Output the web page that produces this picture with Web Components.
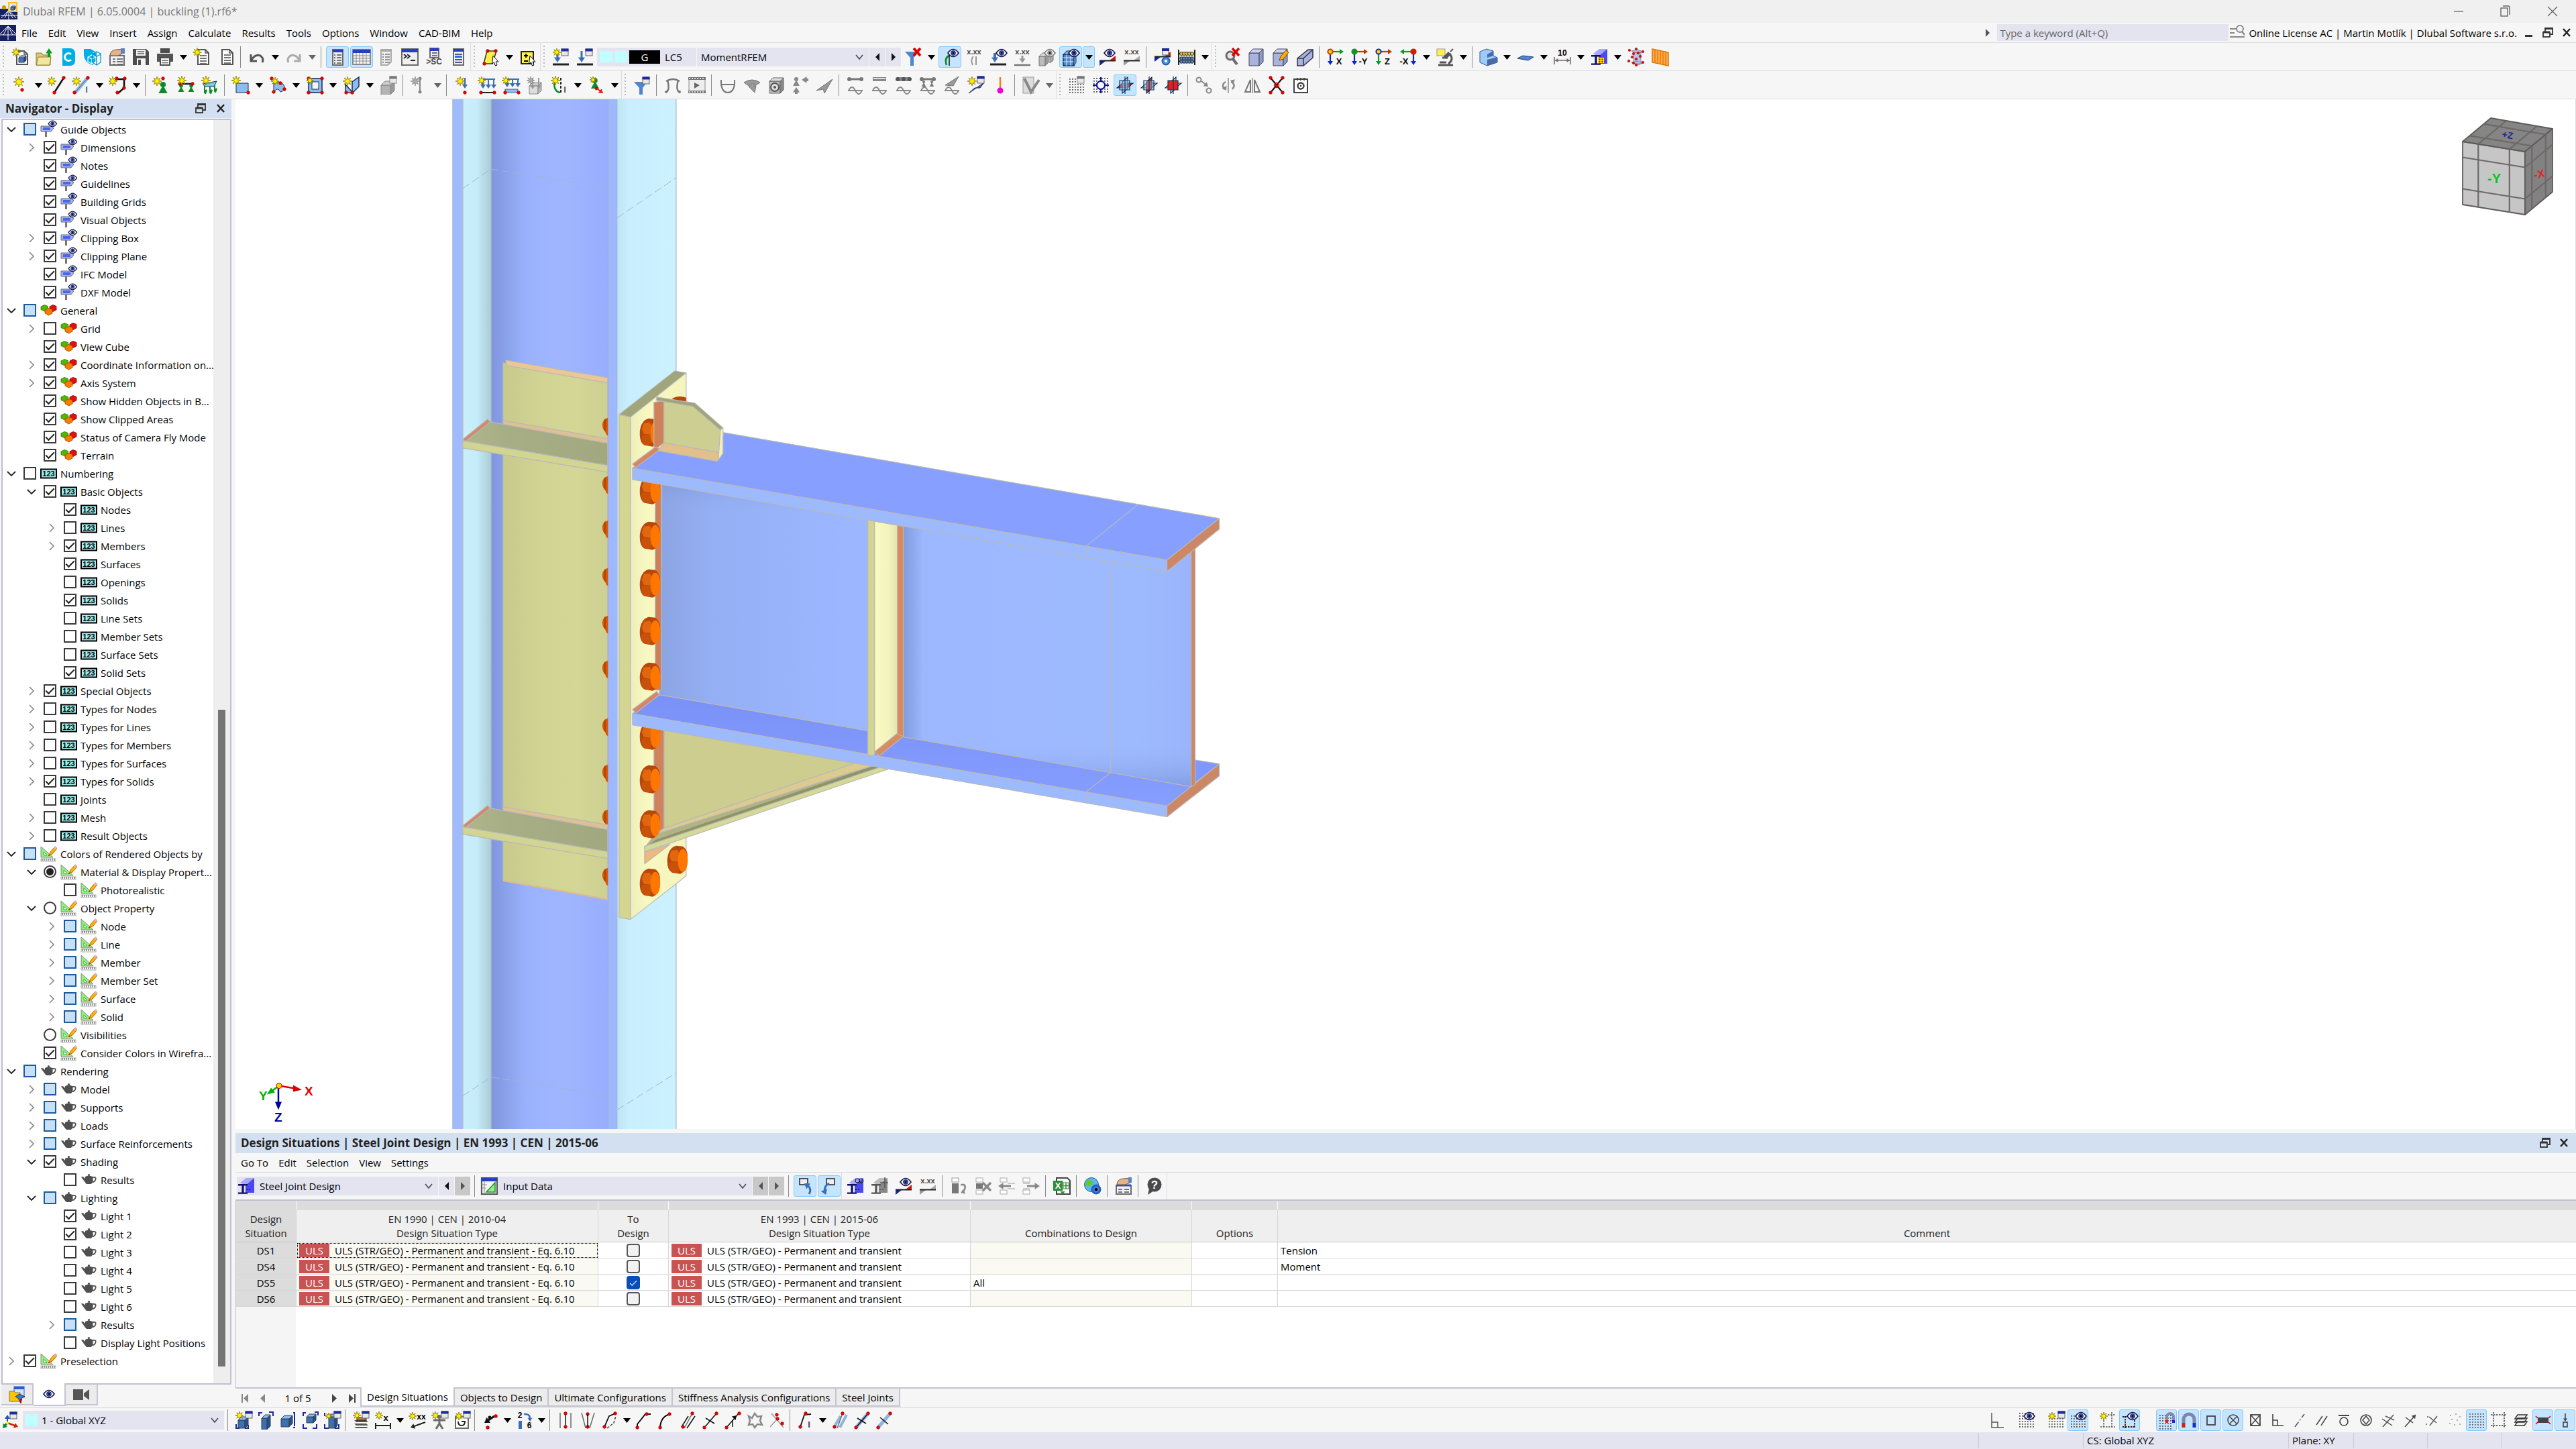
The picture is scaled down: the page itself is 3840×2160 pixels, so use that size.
<!DOCTYPE html>
<html lang="en">
<head>
<meta charset="utf-8">
<title>Dlubal RFEM</title>
<style>
html,body{margin:0;height:100%;background:#f6f6f6}
body{font:15px/20px "Open Sans","Noto Sans",sans-serif;color:#000}
</style>
</head>
<body>
<rf-app></rf-app>
<script>
/* ---------- svg drawing helpers ---------- */
const A=(d,f='none',s='none',w=1)=>`<path d="${d}" fill="${f}" stroke="${s}" stroke-width="${w}"/>`;
const L=(x1,y1,x2,y2,c='#333',w=1.5)=>`<path d="M${x1} ${y1}L${x2} ${y2}" stroke="${c}" stroke-width="${w}" fill="none"/>`;
const R=(x,y,w,h,f='none',s='none',sw=1)=>`<rect x="${x}" y="${y}" width="${w}" height="${h}" fill="${f}" stroke="${s}" stroke-width="${sw}"/>`;
const C=(x,y,r,f='none',s='none',w=1)=>`<circle cx="${x}" cy="${y}" r="${r}" fill="${f}" stroke="${s}" stroke-width="${w}"/>`;
const T=(x,y,s,z=11,f='#000',w=700,a='middle')=>`<text x="${x}" y="${y}" font-family="Liberation Sans,sans-serif" font-size="${z}" font-weight="${w}" fill="${f}" text-anchor="${a}">${s}</text>`;
const star=(x=7,y=7,r=7,f='#ffee00',s='#7a6a00')=>{let p='';for(let i=0;i<16;i++){const k=i%2?r*.42:r,a=i*Math.PI/8;p+=(x+k*Math.sin(a)).toFixed(1)+','+(y-k*Math.cos(a)).toFixed(1)+' '}return `<polygon points="${p}" fill="${f}" stroke="${s}" stroke-width=".7"/>`};
const dot=(x,y,r=2.4)=>C(x,y,r,'#e80000','#900',.5);
const eye=(x=19,y=7)=>A(`M${x-8} ${y}Q${x} ${y-11} ${x+8} ${y}Q${x} ${y+11} ${x-8} ${y}Z`,'#fff','#10104a',1.6)+C(x,y,3.4,'#3a62c8','#10104a',1)+C(x,y,1.4,'#000');
const win=(x=17,y=2)=>R(x,y,10,10,'#e8e8e8','#666',1)+R(x-.5,y-.5,11,4,'#1c2c9a');
const gwin=(x=17,y=2)=>R(x,y,10,10,'#e8e8e8','#888',1)+R(x-.5,y-.5,11,4,'#777');
const ah=(x,y,a,c,s=4)=>`<path transform="translate(${x} ${y}) rotate(${a})" d="M0 0L${-s*1.5} ${-s}L${-s*1.5} ${s}Z" fill="${c}"/>`;
const arr=(x1,y1,x2,y2,c,w=1.8,s=4)=>{const a=Math.atan2(y2-y1,x2-x1),k=s*1.3;return L(x1,y1,(x2-k*Math.cos(a)).toFixed(1),(y2-k*Math.sin(a)).toFixed(1),c,w)+ah(x2,y2,a*180/Math.PI,c,s)};
const page=(x=8,y=3,w=16,h=22,s='#555')=>A(`M${x} ${y}h${w-5}l5 5v${h-5}h${-w}Z`,'#fff',s,2)+A(`M${x+w-5} ${y}v5h5`,'none',s,1.5);
const rows=(x,y,w,n,c='#666',g=4)=>{let s='';for(let i=0;i<n;i++)s+=L(x,y+i*g,x+w,y+i*g,c,1.8);return s};
const grid=(x,y,n,m,c='#555',g=4)=>{let s='';for(let i=0;i<n;i++)for(let j=0;j<m;j++)s+=R(x+i*g,y+j*g,1.8,1.8,c);return s};
const cube=(x,y,w,h,d,f,t,r,s='#345')=>A(`M${x} ${y+d}h${w}v${h}h${-w}Z`,f,s)+A(`M${x} ${y+d}l${d} ${-d}h${w}l${-d} ${d}Z`,t,s)+A(`M${x+w} ${y+d}l${d} ${-d}v${h}l${-d} ${d}Z`,r,s);
const beam=(a,b,c)=>A('M5 9L14 2H26L24 12L12 13Z',b)+A('M26 2V24L13 24V13Z',a)+A('M2 11h14v2.4h-5.4v10H16v2.4H2v-2.4h5.4v-10H2Z',c)+R(13,16,8,6,a)+C(15,19,1,c)+C(19,19,1,c);
const diag=(a,b,y=18)=>A(`M2 ${y}v7l9 -7Z`,a)+A(`M26 ${y-1}v-7l-9 7Z`,b)+L(2,y-.5,26,y-.5,'#222',2);
const xxx=(y=10,c='#444')=>T(14,y,'x.xx',11,c);
const sup=(x,y,c='#0a8a2a',k=1)=>C(x,y,3.4*k,c)+A(`M${x} ${y+1}l${5.5*k} ${10*k}h${-11*k}Z`,c);
const sine=(c='#888')=>A('M3 22h22M4 22q5 -10 10 0t10 0','none',c,1.8);
const cub3=A('M1 4l5 -2.5l5.500 2v5l-5 2.500l-5.500 -2.500Z','#4fb800','#2b7a00',.8)+A('M14 4l5 -2.5l5 2v5.500l-5 2.500l-5 -2.500Z','#e01010','#800',.8)+A('M7 9l5.500 -2.500l5.500 2v5.500l-5.500 3l-5.500 -3Z','#f57c00','#9a4400',.8);
const bl='#3b6fb5',lb='#8fbcf0',db='#1c2c9a',g1='#6b6b6b',gn='#0a8a2a';
const plane=(r1,r2,r3)=>A('M2 18l8 -7h16l-8 7Z',r1,'#135',1.2)+A('M10 9l8 -7v17l-8 7Z',r2,'#135',1.2)+A('M6 7h15v14h-15Z',r3,'#135',1.2)+L(14,1,14,27,'#135',1.2);
const hl=(c='#777')=>L(5,5,23,5,c,3)+C(5,5,3,c)+C(23,5,3,c);
const lens=(x,y)=>C(x,y,6,'#e8e8e8',g1,3)+L(x+4,y+5,x+10,y+13,g1,4);
const axis=(o,h,v,t,l)=>{const r=l?22:6;return arr(r,6,r,26,v,2.2,4)+arr(r,6,l?2:26,6,h,2.2,4)+C(r,6,3.6,o[0],o[1],2)+T(l?8:19,25,t,13)};
/* ---------- icon glyphs on a 28 x 28 field ---------- */
const ICONS={
 none:'',
 logo:R(0,10,26,16,'#16205e')+A('M2 24L13 12L24 24M13 12V26M1 20H26M7 24L13 12L19 24','none','#fff',1)+R(13,1,12,13,'#dfe8f5','#ffc400',2)+cube(16,6,5,4,2,'#5a86c0','#8fb0dc','#34588c')+C(6,8,3,'#c89a00'),
 logo2:R(0,2,24,24,'#16205e')+A('M0 17H24M12 4V25M12 4L0 16M12 4L24 16M12 4L5 17M12 4L19 17','none','#fff',1),
 new:page(9,5,16,20)+cube(12,12,8,7,3,'#4a76b8','#8fb0dc','#274c86')+star(8,7,6.5),
 open:A('M2 8h8l2 3h11v15H2Z','#d9c877','#8c7a2a')+A('M2 26L5 14H24L22 26Z','#f2e6a0','#8c7a2a')+arr(21,14,21,1,'#0a9a1e',4,5),
 cloud:A('M5 1h12a7 7 0 0 1 7 7v12a7 7 0 0 1 -7 7h-12Z','#00aee6')+A('M18 10a5.500 5.500 0 1 0 0 8','none','#fff',3),
 cubes:A('M1 2h10l9 5v12l-6 7Q1 22 1 9Z','#00aee6')+A('M7 14l6 -3l6 3v7l-6 3l-6 -3ZM7 14l6 3l6 -3M13 17v7M15 8l6 -3l5 3v14l-7 4','none','#fff',1.2)+A('M15 9l5 -3l6 3v13l-6 4l-6 -4V10M15 10l5 3l6 -3M20 13v13','none','#0093c8',1.3),
 handlist:R(4,12,21,14,'#f4f4f4',g1,2)+rows(8,17,4,3)+rows(14,17,9,3)+A('M4 10Q6 3 14 3l10 -1v6l-8 4H5Z','#e3b48a','#7a5230')+R(20,1,6,8,'#5b84c4'),
 save:A('M2 2h20l4 4v20H2Z','#4d4d4d')+R(7,3,14,9,'#f4f4f4')+rows(9,6,10,2,'#777',3)+R(8,16,13,10,'#f4f4f4')+R(10,18,4,8,'#4d4d4d'),
 print:R(7,1,14,7,'#4d4d4d')+A('M2 9h24v12H2Z','#555')+R(7,15,14,11,'#fff','#4d4d4d',2)+rows(9,19,10,2,'#777',3.500),
 starpage:page()+rows(11,12,10,4)+star(7,7,6.500),
 page:page()+rows(11,11,10,4),
 undo:A('M5 10v10h9M6 18Q12 9 19 12Q25 16 22 22','none','#555',3),
 redo:A('M23 10v10h-9M22 18Q16 9 9 12Q3 16 6 22','none','#aaa',3),
 nav:R(7,3,15,23,'#eee',g1,2)+R(7,3,15,4,'#2a3cc0')+rows(9,11,2,4)+rows(13,11,7,4),
 table:R(1,3,26,22,'#f4f4f4',g1,1.500)+R(1,3,26,5,'#2a3cc0')+A('M1 12h26M1 16h26M1 20h26M6 8v17M11 8v17M16 8v17M21 8v17','none','#888',1),
 listg:A('M7 3h15v18l-5 5H7Z','#eee','#aaa',2)+R(7,3,15,3,'#aaa')+rows(9,10,2,4,'#888')+rows(13,10,7,4,'#888'),
 console:R(2,2,24,24,'#f0f0f0',g1,2)+R(2,2,24,5,'#2a3cc0')+A('M5 10l4 3l-4 3M10 10l4 3l-4 3','none','#222',1.800)+L(15,19,22,19,'#222',2),
 sc:R(8,1,13,14,'#eee',g1,2)+R(8,1,13,4,'#2a3cc0')+rows(11,8,8,2)+T(14,25,'&gt;SC',12,'#444'),
 panel:R(7,2,15,24,'#eee',g1,2)+R(7,2,15,4,'#2a3cc0')+rows(9,10,11,4,'#446',4)+R(9,12,10,3,'#2a6cf0'),
 select:A('M8 5L22 5L16 24L3 24Z','#ffee44','#333',1.500)+dot(9,5)+dot(21,5)+dot(4,24)+A('M17 12l8 9l-4 0l2 5l-2.500 1l-2 -5l-3 2Z','#fff','#000',1),
 plusminus:R(4,6,18,18,'#fff04a','#222',2)+A('M8 12h6M11 9v6M8 20h6','none','#000',1.8)+A('M17 12l8 9l-4 0l2 5l-2.500 1l-2 -5l-3 2Z','#fff','#000',1),
 loadstar:arr(9,6,9,22,bl,3,5)+L(2,25,26,25,'#222',3)+star(8,7,6)+win(15,2),
 load:arr(9,5,9,22,bl,3,5)+L(2,25,26,25,'#222',3)+win(15,2),
 funnelx:A('M2 6h20l-7 9v12h-5V15Z','#4f86cc')+A('M15 1l10 11M25 1l-10 11','none','#e00000',4),
 funnel:A('M2 9h20l-7 9v10h-5V18Z','#4f86cc')+win(15,2),
 eyesup:A('M14 11Q5 15 9 26','none',gn,2.500)+A('M13 12v15','none','#222',1.6)+eye(19,8),
 xxxsup:xxx()+A('M13 13Q8 18 12 26M17 13v13','none','#999',2),
 eyeload:arr(9,8,9,22,bl,4,5)+L(2,25,26,25,'#222',3)+eye(19,8),
 xxxload:xxx()+arr(14,12,14,23,'#999',3,4.500)+L(2,26,26,26,'#777',2.500),
 boxes:cube(3,8,9,14,5,'#bbb','#ddd','#999','#777')+A('M19 13v10l5 -4V12','#aaa','#777')+eye(19,8).replaceAll('#10104a','#777').replace('#3a62c8','#aaa'),
 grideye:A('M3 10h16v17H3Z','#4f86cc','#135',1.500)+A('M3 15h16M3 21h16M8 10v17M14 10v17','none','#dcecff',1)+A('M3 10l5 -5h14v17l-3 5V10Z','#86b2e8','#135',1)+eye(19,8),
 eyediag:diag('#15259a','#d01800',20)+eye(17,8),
 xxxdiag:xxx()+diag('#999','#aaa',20),
 resset:diag('#15259a','#c01010',14)+R(14,2,9,9,'#eee','#555')+R(13,1,11,4,db)+C(19,20,5.500,'#4f8fe0','#1f5fb0',2)+C(19,20,2,'#fff'),
 abacus:A('M2 3v23M26 3v23M2 9h24M2 20h24','none','#222',2)+[6,10,14,18,22].map(x=>C(x,9,2.500,'#f0d040','#222')+C(x,16,2.300,'#5a8ad0','#222')+C(x,21,2.300,'#5a8ad0','#222')).join(''),
 lensx:lens(11,12)+A('M14 1l10 11M24 1l-10 11','none','#e00000',3.500),
 cube:cube(3,2,15,19,6,'#a9b4de','#ccd4f0','#8c98cc','#445'),
 cubepen:cube(3,2,15,19,6,'#a9b4de','#ccd4f0','#8c98cc','#445')+A('M12 19l2 -6l8 -9l4 3l-8 10Z','#ffae00','#8a4a00'),
 cubeflat:A('M3 16L19 3H26V15L12 27H3Z','#a9b4de','#334',1.500)+A('M3 16H12V27M12 16L26 3','none','#334',1.500),
 axX:axis(['#ffd400','#e03000'],'#0a9a2a','#0a28c8','X'),
 axY:axis(['#0a9a2a','#0a9a2a'],'#d03000','#0a28c8','-Y'),
 axZ:axis(['#ffd400','#0a28c8'],'#d03000','#0a9a2a','Z'),
 axmX:axis(['#d02000','#d02000'],'#0a9a2a','#0a28c8','-X',1),
 micro:R(2,2,12,10,'#fff04a','#999')+A('M12 13l7 -7l4 4l-7 7Z','#555')+A('M21 9Q28 18 19 24M10 15h8M4 26h22M6 22h10','none','#555',3)+L(22,6,26,2,'#555',2),
 step:A('M1 6L11 2L21 5V12L27 15V22L12 27L1 22Z','#9ccbff','#34588c')+A('M12 10L21 5V12L12 15ZM12 18L27 14V22L12 27Z','#4a6ba8'),
 plate:A('M2 16L10 12L26 14L18 19Z','#4f86cc','#1c3c70'),
 dim10:T(14,12,'10',12)+A('M2 14v11M26 14v11M3 19h22','none',g1,1.500)+ah(3,19,180,g1,3)+ah(25,19,0,g1,3),
 beam:beam('#4a48f0','#a8a8ff','#10106a')+R(12,15,9,8,'#ffee00')+dot(14.500,17.500,1)+dot(18.500,17.500,1)+dot(14.500,21,1)+dot(18.500,21,1),
 beamg:beam('#4a48f0','#a8a8ff','#10106a')+C(17,6,3,'none','#111')+C(23,6,3,'none','#111'),
 beamp:beam('#4a48f0','#a8a8ff','#10106a'),
 beamgr:beam('#888','#bbb','#555')+A('M22 1v16M15 9h12','none','#555',1.500),
 rdots:A('M7 5L16 3L24 6L17 9ZM7 22L16 20L24 23L17 26ZM10 7h11v17H10Z','#b4c6e6','#88a')+[[4,4],[14,2],[24,6],[10,9],[17,8],[8,14],[20,13],[14,17],[3,20],[24,22],[10,23],[14,26]].map(p=>dot(p[0],p[1],1.800)).join(''),
 orange:A('M2 2L26 7V27L2 22Z','#ffa94d','#e07800',1.500)+A('M6 3v20M10 4v20M14 5v20M18 6v19M22 7v19','none','#e07800',1.300),
 stardot:star(12,9,8)+dot(17,21),
 sline:L(10,25,24,3,'#111',2.500)+dot(10,25)+dot(24,3)+star(6,8),
 smember:L(5,25,23,4,'#8fb4e0',5)+L(5,25,23,4,'#456',.8)+dot(4,25)+dot(24,3)+star(7,8)+T(22,25,'I',13,'#46a'),
 spoly:A('M8 5H23V18L14 26','none','#111',2.500)+dot(12,4)+dot(24,4)+dot(23,18)+dot(13,25)+star(6,8),
 ssup:sup(16,13,gn,1.200)+dot(16,4)+star(7,8),
 ssup2:L(5,12,24,12,'#222',2.500)+sup(7,15,gn,.8)+sup(22,15,gn,.8)+dot(5,12)+dot(24,12)+star(8,7),
 ssup3:A('M4 12L24 8L20 16L6 16Z','#7cc6e8','#135')+A('M6 16v8l3 -3l-2 6M14 16v8l3 -3l-2 6M21 14v8l3 -3l-2 6','none',gn,2)+star(8,7),
 ssurf:A('M7 11H25V25H7Z',lb,'#135')+dot(25,25)+star(7,7),
 ssurf2:A('M8 10Q20 6 24 16Q26 22 18 24Q14 16 8 24Z',lb,'#135')+dot(5,4)+dot(18,11)+dot(24,20)+dot(8,24)+star(10,8,6),
 ssurf3:R(5,4,20,21,lb,'#135',1.500)+R(10,9,10,11,'#f6f6f6','#135')+dot(5,4)+dot(25,4)+dot(5,25)+dot(25,25)+star(7,7,5.500),
 ssurf4:A('M5 13L15 24V9L25 2V16L15 26L5 24Z',lb,'#135',1.500)+dot(6,25)+dot(15,25)+star(8,8),
 solidg:cube(3,8,14,14,6,'#b4b4b4','#ccc','#999','#888')+gwin(16,1),
 starg:star(8,8,7,'#aaa','#888')+L(15,4,15,24,'#888',2)+C(15,4,2.500,'#888')+C(15,24,2.500,'#888'),
 ld1:arr(17,3,17,19,bl,2.500,4)+dot(17,25)+star(10,8),
 ld2:A('M6 5h20','none',bl,2)+arr(8,5,8,19,bl,2)+arr(16,5,16,19,bl,2)+arr(24,5,24,19,bl,2)+L(5,25,24,25,'#222',2)+dot(5,25)+dot(25,25)+star(6,7,6),
 ld3:A('M6 5h20','none',bl,2)+arr(8,5,8,17,bl,2)+arr(16,5,16,17,bl,2)+arr(24,5,24,17,bl,2)+R(5,20,19,5,lb,'#468')+dot(5,25)+dot(25,25)+star(6,7,6),
 ldg:cube(5,10,13,12,5,'#ddd','#ccc','#bbb','#888')+arr(10,3,10,20,'#999',2)+arr(19,3,19,20,'#999',2)+star(7,7,6,'#aaa','#888'),
 ldm:A('M12 4Q4 10 7 18Q9 24 15 25','none',gn,2.500)+`<path d="M16 3V25" stroke="#222" stroke-width="2" stroke-dasharray="4 2"/>`+T(22,25,'I',13,'#555')+star(8,7),
 ldn:sup(12,7,gn,1.100)+dot(14,19,2)+arr(15,19,24,26,'#e02020',2)+star(9,6,5),
 gsnap:A('M4 24Q10 22 6 6M24 24Q18 22 22 6M4 8Q14 2 24 8','none','#777',2.500)+C(4,24,2,'#777')+C(24,24,2,'#777'),
 film:R(2,5,24,18,'#eee','#888')+A('M1 4h26M1 24h26','none','#777',4)+`<path d="M2 4h24M2 24h24" stroke="#fff" stroke-width="1.500" stroke-dasharray="2 2"/>`+A('M10 10l8 4l-8 5Z','#666'),
 bend:A('M4 6v7Q6 25 14 25Q22 25 24 13V6M4 13h20','none','#777',2),
 fan:A('M2 10Q14 2 26 10L20 14Q14 9 9 15ZM9 16Q14 11 20 15L18 25Z','#999','#777'),
 speaker:cube(4,3,16,18,5,'#bbb','#ddd','#888','#666')+C(12,17,6,'#ddd','#555',2)+C(12,17,2,'#555'),
 darr:sup(8,5,'#888',.9)+arr(26,6,16,6,'#888',4,5)+arr(8,27,8,17,'#888',4,5),
 wedge:A('M2 22L26 5L14 26L12 20Z','#999','#777'),
 wav1:hl()+sine(),wav2:L(4,5,24,5,'#888',6)+L(5,4,23,4,'#ddd',2)+sine(),wav3:L(4,5,24,5,'#888',6)+C(5,5,3,'#555')+C(14,5,3,'#555')+C(23,5,3,'#555')+sine(),
 wav4:hl('#777')+sup(8,9,'#777',.6)+sup(20,9,'#777',.6)+sine(),wav5:A('M4 14L24 1L16 15Z','#999','#777')+sine(),
 starwin:A('M3 26L26 10L20 18L12 18Z','#3a6cff','#224')+win(16,1)+star(8,8),
 pin:L(14,2,14,20,'#ff7a1a',2.500)+C(14,22,4.500,'#f000d0'),
 ecgr:R(2,2,16,24,'#ddd','#999')+A('M4 4L14 24L26 6','none','#888',4),
 gridwin:grid(3,4,6,6)+gwin(15,1),
 snap:grid(3,3,6,6)+C(14,14,6,'#f6f6f6','#1010a0',2)+A('M14 2v7M14 19v7M2 14h7M19 14h7','none','#1010a0',2),
 pl1:plane('#e02020','#8fc4ee99','#8fc4ee66'),pl2:plane('#8fc4ee99','#e02020','#8fc4ee66'),pl3:plane('#8fc4ee99','#8fc4ee99','#e02020'),
 nodes:C(6,6,3.500,'none','#888',2)+C(21,22,3.500,'none','#888',2)+arr(10,8,20,16,'#888',2),
 rot:A('M10 9Q3 13 8 20M18 9Q26 13 20 20','none','#888',2.500)+L(14,3,14,26,'#888',1.500)+ah(11,22,60,'#888')+ah(17,7,200,'#888'),
 mirror:A('M3 24L11 6V24ZM25 24L17 6V24Z','none','#777',2)+L(14,3,14,26,'#777',1.200),
 redx:L(5,3,23,25,'#111',2)+L(23,3,5,25,'#111',2)+dot(5,3)+dot(23,3)+dot(5,25)+dot(23,25)+C(14,14,3.500,'none','#e00',1.500)+dot(14,14,1.500),
 gear:A('M4 5h20v20H4Z','#fff','#444',2)+C(14,15,4.500,'none','#444',2.500)+C(14,15,1.400,'#444')+A('M9 3v4M14 3v4M19 3v4','none','#444',2),
 cs:win(12,2)+arr(8,17,8,6,'#2050d0',2)+arr(8,18,24,24,'#d02000',2.500)+arr(8,18,1,26,gn,3)+C(8,18,2,'#ff0'),
 wb1:cube(6,9,10,12,5,'#3f6fb0','#8fbcf0','#27508c')+A('M3 20v6h5M16 26h5v-5','none',db,2)+star(8,7,6)+win(17,1),
 wb2:cube(8,6,8,17,5,'#3f6fb0','#8fbcf0','#27508c')+A('M4 8v-5h5M19 2h6v6','none',db,2),
 wb3:cube(4,7,12,12,5,'#3f6fb0','#8fbcf0','#27508c')+A('M24 3v20M22 3h3M22 25h3','none',db,2),
 wb4:cube(9,5,10,9,4,'#3f6fb0','#8fbcf0','#27508c')+A('M4 20v6h6M18 26h6v-6M4 8v-5h4M21 2h5v5','none',db,2),
 wb5:cube(9,5,9,17,4,'#3f6fb0','#8fbcf0','#27508c')+A('M3 20v6h6M18 26h6v-6M3 8v-5','none',db,2)+star(9,8,5)+win(17,1),
 stk:A('M4 14h18l3 3H7ZM4 19h18l3 3H7ZM4 24h18l3 2H7Z','#555')+R(8,10,14,4,'#d07a3a','#222')+star(8,7,6)+win(16,1),
 starx:A('M3 18v9M25 18v9M4 22h20','none','#222',2)+T(18,15,'x',13)+star(8,7,6),
 xx:T(20,13,'xx',12)+arr(26,17,4,25,'#222',2)+star(7,8,6),
 person:C(14,9,3,g1)+A('M5 14h18M14 12v7l-5 8M14 19l5 8','none',g1,3)+star(8,7,6)+win(17,1),
 seldoc:R(5,9,19,17,'#fff',g1,2)+A('M9 16q0 6 5 6t5 -6h-5','none','#222',2)+star(10,8,6)+win(17,1),
 dots:arr(20,8,5,18,'#111',3,5)+dot(22,8,2.500)+dot(10,25,2.500)+C(13,10,2.500,'#111'),
 renum:T(7,11,'2',12)+T(21,26,'6',12)+R(5,15,5,12,bl)+A('M13 5Q22 4 22 12','none',bl,2.500)+ah(22,16,90,bl,3.500),
 l1:L(6,3,6,26,g1)+L(22,3,22,26,g1)+L(14,4,14,24,'#111')+dot(14,4)+dot(14,24),
 l2:L(5,3,11,26,g1)+L(24,3,17,26,g1)+dot(14,5)+dot(14,24)+L(14,5,14,24,'#111'),
 l3:A('M6 24L13 8L22 4','none','#111',1.800)+dot(6,24)+dot(22,4)+`<path d="M10 26L20 18L23 8" fill="none" stroke="#444" stroke-width="1.500" stroke-dasharray="4 2"/>`,
 l4:A('M4 25V20L16 5H24','none','#111',2)+dot(4,25)+dot(18,5),
 l5:A('M5 25Q6 8 20 5','none','#111',2)+dot(5,25)+dot(19,5),
 l6:L(4,24,14,8,'#111')+L(12,26,24,8,'#111')+L(8,26,20,4,g1)+dot(20,4)+dot(6,24),
 l7:L(5,25,23,4,'#111')+L(7,11,20,19,'#111')+dot(23,4)+dot(5,25),
 l8:L(5,25,23,4,'#111')+L(14,24,14,14,'#111')+ah(20,7,-45,'#111',4)+dot(24,4)+dot(5,25),
 l9:A('M5 8l5 3l4 -7l4 5l6 -1l-2 7l3 6l-7 -1l-4 5l-3 -5l-6 1l2 -6Z','none','#888',2.500),
 l10:L(6,4,24,25,'#999')+L(4,24,15,12,'#999')+dot(14,6)+dot(15,12)+dot(22,19),
 m1:A('M6 24L12 6L22 5','none','#111',1.800)+dot(6,24)+dot(14,4)+T(19,25,'I',13,'#444'),
 m2:L(5,25,15,8,'#8fb4e0',4)+L(14,25,24,6,'#8fb4e0',4)+L(10,26,18,4,g1)+dot(18,4)+dot(6,24),
 m3:L(5,25,23,4,'#8fb4e0',5)+L(5,25,23,4,'#111')+L(7,11,20,19,'#111')+dot(23,4)+dot(5,25),
 m4:L(5,25,23,4,'#8fb4e0',5)+L(8,10,20,20,'#111')+dot(23,4)+dot(5,25),
 perp:A('M6 3V25H24M6 17h9v8','none','#555',1.500),
 geye:grid(3,3,6,6)+eye(18,8),gwinb:grid(3,11,6,4)+star(8,8,6)+win(17,1),
 geyeb:grid(3,7,6,5)+eye(18,8),
 beye:`<path d="M3 9h6M7 8v18M3 24h20M21 14v12" fill="none" stroke="#222" stroke-width="1.800" stroke-dasharray="2.500 1.500"/>`+eye(18,8),bstar:`<path d="M3 24h22M20 2v24M8 14v12M14 6h12" fill="none" stroke="#555" stroke-width="1.500" stroke-dasharray="2.500 1.500"/>`+star(8,8,6),
 magg:grid(3,6,5,6)+A('M14 15V9a5 5 0 0 1 10 0v6','none','#88a',4)+R(12,14,4,4,'#d22')+R(22,14,4,4,'#22d'),
 mag:A('M6 18V13a8 8 0 0 1 16 0v5','none','#7f86ad',5)+R(3.500,18,5,7,'#d02010')+R(19.500,18,5,7,'#1030d0'),
 sq:R(8,8,12,13,'none','#444',1.800),cx:C(14,14,8,'none','#444',1.500)+L(8,8,20,20,'#444')+L(20,8,8,20,'#444'),
 sqx:R(7,6,14,16,'none','#444',1.800)+L(7,6,21,22,'#444')+L(21,6,7,22,'#444'),
 perp2:A('M7 5V22H23M7 14h7v8','none','#444',1.600),
 dl:`<path d="M7 24L21 5" stroke="#555" stroke-width="1.500" stroke-dasharray="9 3 2 3"/>`,par:L(6,21,15,8,'#444')+L(13,22,22,8,'#444'),
 tan:C(14,16,6,'none','#444',1.700)+L(6,7,22,7,'#444',2),dia:C(14,14,8,'none','#444',1.600)+A('M14 8l5 6l-5 6l-5 -6Z','none','#444',1.500),
 x1:L(6,24,22,6,'#555')+L(5,12,20,22,'#555')+L(10,8,23,14,'#555'),x2:L(6,24,22,6,'#444')+L(7,10,18,18,'#444')+ah(22,6,-48,'#444',3.500),
 x3:L(10,22,21,8,'#555')+L(9,9,20,18,'#555')+C(5,20,1,'#555')+C(7,9,1,'#555'),x4:[[8,7],[16,5],[22,9],[10,13],[18,14],[7,19],[14,21],[22,20]].map(p=>C(p[0],p[1],1,'#999')).join(''),
 g4:grid(3,4,6,6,'#666'),bsq:`<path d="M2 6h24M2 22h24M6 2v24M22 2v24" fill="none" stroke="#444" stroke-width="1.500" stroke-dasharray="2.500 1.500"/>`,
 layers:A('M5 22l4 -6h14l-4 6ZM5 17l4 -6h14l-4 6ZM5 12l4 -6h14l-4 6Z','#eee','#333',1.500),
 seg:R(6,10,16,8,'#444')+A('M3 8l3 3M3 20l3 -3M25 8l-3 3M25 20l-3 -3','none','#e00',1.500),
 dnl:arr(14,4,14,16,'#444',1.600,3)+R(11,17,6,7,'none','#444',1.600),
 tl:R(6,3,12,9,'#eee','#444',1.800)+A('M20 26Q25 17 16 12','none',bl,3)+ah(13,10,215,bl,5),
 tr:R(10,3,12,9,'#eee','#444',1.800)+A('M14 10Q5 15 8 23','none',bl,3)+ah(9,27,70,bl,5),
 r1:R(4,2,10,6,'#fff','#999')+R(4,10,10,15,'#777')+A('M17 12h5q4 4 -1 10','none','#888',2.500)+ah(17,24,160,'#888'),
 r2:R(4,2,10,6,'#fff','#aaa')+R(4,10,10,8,'#777')+R(4,20,10,6,'#fff','#aaa')+A('M14 9l12 12M26 9l-12 12','none','#888',3.500),
 r3:R(4,2,10,6,'#fff','#aaa')+R(4,20,10,6,'#fff','#aaa')+arr(20,14,1,14,'#888',3,5)+L(15,10,26,10,'#bbb')+L(15,18,26,18,'#bbb'),
 r4:R(2,2,10,6,'#fff','#aaa')+R(2,20,10,6,'#fff','#aaa')+arr(8,14,27,14,'#888',3,5)+L(2,10,12,10,'#bbb')+L(2,18,12,18,'#bbb'),
 excel:A('M6 2h16l4 4v20H6Z','#fff','#444',2)+R(1,6,14,15,'#2e8b3a')+T(8,18,'X',13,'#fff')+R(16,9,8,9,'#fff','#2e8b3a')+L(20,9,20,18,'#2e8b3a')+L(16,13.500,24,13.500,'#2e8b3a')+A('M11 22h8l-4 4Z','#2e8b3a'),
 globe:C(12,12,10.500,'#5cb8f0','#2060b0')+A('M5 5q7 -2 9 3t-6 6t-5 -3ZM14 15q5 0 3 6l-4 1Z','#5fc83a')+C(19,19,6,'#3f7fe0','#2a60c0',3)+C(19,19,2.200,'#000'),
 hand2:R(3,13,22,13,'#f4f4f4',g1,2)+L(3,13,25,13,'#3050c0',3)+rows(6,19,6,2)+rows(15,19,7,2)+A('M4 10Q6 3 14 3l10 -1v7l-8 3H5Z','#e3b48a','#7a5230')+R(21,1,5,8,'#5b84c4'),
 help:C(14,12,10.500,'#4a4a4a')+A('M6 18L4 27L13 21Z','#4a4a4a')+T(14,18,'?',17,'#fff'),
 inp:R(2,2,23,24,'#f4f4f4','#555',2)+R(2,2,23,5,'#2a3cc0')+A('M9 23L22 9V23Z','#8ff08f','#2a8a2a',1.500)+A('M2 12h8M2 17h6M6 7v17','none','#888'),
 guide:A('M3 9H18L22 12L18 17H3Z','#a9b4e6','#667')+R(6,11,11,4,'#4a66f0')+R(9,17,3,8,'#777')+`<g transform="translate(5.500 0) scale(.78)">${eye(19,7)}</g>`,
 gen:`<g transform="translate(2 4)">${cub3}</g>`,
 num:R(3,7.500,23,13,'#9ff0ee','#000',2)+T(14.500,18,'123',11),
 col:A('M3 3L21 19H3Z','#8ff07c','#888')+A('M7 11l5 5H7Z','#fff','#4a4')+A('M15 16l2 -5l7 -8l3 3l-7 8Z','#ffb400','#a60')+A('M22 5l2.500 -3l3 3l-2.500 2.500Z','#e8b0c0')+C(15,16,1,'#e00')+R(3,21,22,4,'#fff','#999',.8)+A('M5 21v3M8 21v3M11 21v3M14 21v3M17 21v3M20 21v3M23 21v3','none','#444',1),
 tea:A('M9 9Q14 6 20 9Q22 16 18 20H11Q9 18 7 15L3 9.500Q6 8 9 12Z','#4f4f4f')+A('M20 10q6 -1 4.500 3q-1 4 -5 4','none','#4f4f4f',1.800)+C(14.500,6.500,1.600,'#4f4f4f'),
 navA:R(10,2,15,16,'#cfe4ff','#35c')+R(10,2,15,4,'#2a5cd0')+A('M3 9h7l2 2h7v13H3Z','#ffc400','#775')+A('M12 17l6 -4l8 4l-4 1l-2 9l-4 -8Z','#3a7ad0','#234')+L(20,20,20,27,'#d00',2),
 navB:eye(14,14),navC:A('M2 6h15v16H2ZM18 12l8 -6v16l-8 -6Z','#555'),
 min:L(7,14,21,14,'#666',1.300),max:R(7,9,10,12,'none','#666',1.400)+A('M10 6h8q2 0 2 2v11','none','#666',1.400),cls:A('M7 7l14 14M21 7L7 21','none','#666',1.400),
 mmin:R(8,17,11,3,'#333'),dock:R(7,13,10,7,'none','#333',1.800)+A('M10 12V7h11v9h-3','none','#333',1.800)+L(10,7.500,21,7.500,'#333',3)+L(7,13,17,13,'#333',3),x:A('M9 8l10 11M19 8L9 19','none','#222',2.500),
 find:A('M2 8h9M2 14h7M2 20h22','none','#888',2.200)+C(17,8,5,'none','#888',2)+L(20,12,24,17,'#888',2.200),
 chev:A('M9 11l5 6l5 -6','none','#444',1.500),al:A('M17 8v12l-6 -6Z','#111'),ar:A('M11 8v12l6 -6Z','#111'),arg:A('M11 8v12l6 -6Z','#555'),
 pf:R(9,8,2,13,'#888')+A('M19 8v13l-7 -6.500Z','#888'),pp:A('M18 8v13l-7 -6.500Z','#888'),pn:A('M10 8v13l7 -6.500Z','#444'),pl:R(17,8,2,13,'#444')+A('M9 8v13l7 -6.500Z','#444'),
 tri:A('M9 11h11l-5.500 7Z','#000'),trig:A('M9 11h11l-5.500 7Z','#666')
};
ICONS.alg=ICONS.al.replace('#111','#555');
/* ---------- base class ---------- */
class El extends HTMLElement{
 constructor(){super();this.attachShadow({mode:'open'})}
 connectedCallback(){if(!this.done){this.done=1;this.shadowRoot.innerHTML='<style>*{box-sizing:border-box}button,input,select{font:inherit;color:inherit;margin:0}button{border:0;background:none;padding:0}'+this.css()+'</style>'+this.html()}}
 css(){return ':host{display:block}'} html(){return '<slot></slot>'}
}
const def=(n,css,html)=>customElements.define(n,class extends El{css(){return typeof css=='function'?css(this):css}html(){return typeof html=='function'?html(this):html}});
const ic=n=>`<rf-icon name="${n}"></rf-icon>`;
def('rf-icon',':host{display:block;width:28px;height:28px;flex:none}svg{display:block;width:100%;height:100%}',e=>`<svg viewBox="0 0 28 28" aria-hidden="true">${ICONS[e.getAttribute('name')]||''}</svg>`);

/* a group of tool buttons: "|" separator, "v" drop-down arrow, "*" pressed, "_" gap */
def('rf-tools',`:host{display:flex;align-items:center;height:100%;flex:none;--w:34px;--v:18px}
:host([handle])::before{content:"";width:2px;height:34px;margin:0 6px 0 4px;background:repeating-linear-gradient(#bbb 0 2px,transparent 2px 5px)}
:host([end]){border-right:1px solid #dcdcdc}
:host([small]){--w:31px;--v:17px}
button{width:var(--w);height:32px;margin:0 1px;display:flex;align-items:center;justify-content:center;border:1px solid transparent;border-radius:3px;flex:none}
button.v{width:var(--v);margin:0 1px 0 0}
button.on{background:#c4e4ff;border-color:#86caf8}
i{width:1px;height:32px;background:#8c8c8c;margin:0 6px 0 3px;flex:none}
s{width:11px;flex:none}`,e=>e.getAttribute('items').split(' ').map(k=>k=='|'?'<i></i>':k=='_'?'<s></s>':k=='v'||k=='*v'?`<button class="v ${k=='v'?'':'on'}" aria-label="More">${ic('tri')}</button>`:k=='V'?`<button class="v" aria-label="More">${ic('trig')}</button>`:`<button class="${k[0]=='*'?'on':''}" aria-label="${k.replace('*','')}">${ic(k.replace('*',''))}</button>`).join(''));
def('rf-bar',`:host{display:flex;align-items:center;height:42px;border-top:1px solid #dcdcdc;background:#f6f6f6}`,'<slot></slot>');

def('rf-title',`:host{display:flex;align-items:center;height:34px;background:#f0f0f0;color:#777;font-size:16px}
span{margin-left:6px;flex:1}button{width:70px;height:34px;display:flex;align-items:center;justify-content:center}`,
`${ic('logo')}<span>Dlubal RFEM | 6.05.0004 | buckling (1).rf6*</span><button aria-label="Minimize">${ic('min')}</button><button aria-label="Restore">${ic('max')}</button><button aria-label="Close">${ic('cls')}</button>`);
def('rf-menu',`:host{display:flex;align-items:center;height:29px;background:#f6f6f6}
nav{display:flex;gap:16px;margin-left:4px;flex:1}
input{width:345px;height:25px;border:0;background:#e4e4f0;padding:0 4px}input::placeholder{color:#666;opacity:1}
span{margin:0 4px 0 2px}button{flex:none}`,
`${ic('logo2')}<nav>${'File Edit View Insert Assign Calculate Results Tools Options Window CAD-BIM Help'.split(' ').map(x=>`<button>${x}</button>`).join('')}</nav>${ic('arg')}<input aria-label="Keyword" placeholder="Type a keyword (Alt+Q)">${ic('find')}<span>Online License AC | Martin Motlík | Dlubal Software s.r.o.</span><button aria-label="Minimize document">${ic('mmin')}</button><button aria-label="Restore document">${ic('dock')}</button><button aria-label="Close document">${ic('x')}</button>`);

def('rf-combo',`:host{display:flex;align-items:center;height:28px;background:#e4e4f0;flex:none}
select{appearance:none;border:0;background:none;flex:1;height:28px;padding:0 6px;min-width:0}
.step{width:24px;height:28px;display:flex;align-items:center;justify-content:center;border-left:1px solid #f6f6f6}
.g{background:#c8c8c8}rf-icon{pointer-events:none}`,
e=>`<slot></slot>${e.hasAttribute('icon')?ic(e.getAttribute('icon')):''}<select aria-label="${e.getAttribute('label')}"><option>${e.getAttribute('value')}</option></select>${ic('chev')}${(e.getAttribute('steps')||'').split(' ').filter(Boolean).map(s=>`<button class="step ${s.endsWith('-')?'g':''}" aria-label="Step">${ic(s.replace('-',''))}</button>`).join('')}`);
def('rf-case',`:host{display:flex;align-items:center;gap:3px;height:28px;padding-left:4px;border-right:1px solid #f6f6f6;width:149px}
i{width:19px;height:17px;background:#c0ffff}b{width:46px;height:20px;background:#000;color:#fff;font-weight:400;text-align:center}span{margin-left:4px}`,'<i></i><i></i><b>G</b><span>LC5</span>');

/* ---------- navigator tree ---------- */
const TREE=`0v- guide Guide Objects
1>x guide Dimensions
1.x guide Notes
1.x guide Guidelines
1.x guide Building Grids
1.x guide Visual Objects
1>x guide Clipping Box
1>x guide Clipping Plane
1.x guide IFC Model
1.x guide DXF Model
0v- gen General
1>o gen Grid
1.x gen View Cube
1>x gen Coordinate Information on...
1>x gen Axis System
1.x gen Show Hidden Objects in B...
1.x gen Show Clipped Areas
1.x gen Status of Camera Fly Mode
1.x gen Terrain
0vo num Numbering
1vx num Basic Objects
2.x num Nodes
2>o num Lines
2>x num Members
2.x num Surfaces
2.o num Openings
2.x num Solids
2.o num Line Sets
2.o num Member Sets
2.o num Surface Sets
2.x num Solid Sets
1>x num Special Objects
1>o num Types for Nodes
1>o num Types for Lines
1>o num Types for Members
1>o num Types for Surfaces
1>x num Types for Solids
1.o num Joints
1>o num Mesh
1>o num Result Objects
0v- col Colors of Rendered Objects by
1vR col Material &amp; Display Propert...
2.o col Photorealistic
1vr col Object Property
2>- col Node
2>- col Line
2>- col Member
2>- col Member Set
2>- col Surface
2>- col Solid
1.r col Visibilities
1.x col Consider Colors in Wirefra...
0v- tea Rendering
1>- tea Model
1>- tea Supports
1>- tea Loads
1>- tea Surface Reinforcements
1vx tea Shading
2.o tea Results
1v- tea Lighting
2.x tea Light 1
2.x tea Light 2
2.o tea Light 3
2.o tea Light 4
2.o tea Light 5
2.o tea Light 6
2>- tea Results
2.o tea Display Light Positions
0>x col Preselection`.split('\n');
def('rf-node',e=>`:host{display:flex;align-items:center;height:27px;padding-left:${3+30*e.getAttribute('level')}px;white-space:nowrap}
button{width:20px;height:20px;margin-right:8px}button svg{display:block}
input{appearance:none;width:19px;height:19px;border:2px solid #3a3a3a;background:#fff;display:grid;place-items:center;flex:none}
input[type=radio]{border-radius:50%}
input.m{border-color:#1d5a9e;background:#c5e0f7}
input[type=checkbox]:checked::before{content:"";width:11px;height:5px;border:solid #222;border-width:0 0 2px 2px;transform:rotate(-45deg) translate(1px,-1px)}
input[type=radio]:checked::before{content:"";width:11px;height:11px;border-radius:50%;background:#222}
label{display:flex;align-items:center;gap:4px;margin-left:4px}`,
e=>{const o=e.getAttribute('open'),s=e.getAttribute('state'),r=/r/i.test(s);return `<button aria-label="Expand"><svg width="20" height="20">${o=='v'?A('M4 7l6 6l6 -6','none','#222',1.8):o=='>'?A('M7 4l6 6l-6 6','none','#888',1.6):''}</svg></button><input id="c" type="${r?'radio':'checkbox'}" class="${s=='-'?'m':''}" ${s=='x'||s=='R'?'checked':''}><label for="c">${ic(e.getAttribute('icon'))}<span><slot></slot></span></label>`});
def('rf-navigator',`:host{display:flex;flex-direction:column;width:345px}
header{display:flex;align-items:center;height:28px;background:#d3e0f1;font-weight:700;padding-left:8px;color:#222;font-size:17px}header span{flex:1}
header button{margin-right:2px}
.box{flex:1;min-height:0;margin:1px 0 0 2px;border:2px solid #c0c0d0;background:#fff;display:flex}
.list{flex:1;min-width:0}
.sb{width:25px;background:#eee;display:flex;justify-content:center;padding:879px 0 25px;flex:none}.sb i{width:11px;background:#757575}
.tabs{display:flex;height:34px;padding-left:2px;align-items:flex-start}
.tabs button{width:48px;height:31px;display:flex;align-items:center;justify-content:center;background:#ececec;border:2px solid #c4c4d2;border-top:0;border-left:0}
.tabs .on{background:#fff;height:34px;margin-top:-2px}`,
`<header><span>Navigator - Display</span><button aria-label="Float">${ic('dock')}</button><button aria-label="Close">${ic('x')}</button></header><div class="box"><div class="list">${TREE.map(l=>{const m=l.match(/^(\d)(.)(.) (\w+) (.*)$/);return `<rf-node level="${m[1]}" open="${m[2]}" state="${m[3]}" icon="${m[4]}">${m[5]}</rf-node>`}).join('')}</div><div class="sb"><i></i></div></div><div class="tabs" role="tablist"><button aria-label="Data">${ic('navA')}</button><button class="on" aria-label="Display">${ic('navB')}</button><button aria-label="Views">${ic('navC')}</button></div>`);

/* ---------- model view ---------- */
const poly=(p,f,s='#b8b8b8',w=1.2)=>`<polygon points="${p}" fill="${f}" stroke="${s}" stroke-width="${w}" stroke-linejoin="round"/>`;
const lin=(id,h,stops)=>`<linearGradient id="${id}" ${h?'':'x2="0" y2="1"'}>${stops.map(s=>`<stop offset="${s[0]}" stop-color="${s[1]}" ${s[2]!=null?`stop-opacity="${s[2]}"`:''}/>`).join('')}</linearGradient>`;
const bolt=(x,y)=>`<g transform="translate(${x} ${y})"><path d="M-15 -2Q-13 -18 -2 -21L8 -20Q14 -16 15 -8V4Q13 18 4 21L-8 19Q-16 15 -15 -2Z" fill="#b9470a"/><path d="M-9 -14L0 -15L3 -9L0 3L-9 2L-12 -5Z" fill="#e0670f"/><path d="M-12 5L-9 3L0 4L3 12L0 20L-8 18Q-14 14 -12 5Z" fill="#c9520a"/><ellipse cx="8" cy="1" rx="7.500" ry="17" fill="#ff7700"/></g>`;
const hb=y=>`<path d="M907 ${y-13}Q899 ${y-12} 898 ${y-3}Q898 ${y+4} 902 ${y+7}L904 ${y+12}L907 ${y+14}Z" fill="#d4570a"/><path d="M902 ${y-11}v18" stroke="#a03c04" stroke-width="1.500"/>`;
const stiff=d=>`<g transform="translate(0 ${d})">${poly('750,627 906,654 906,661 750,634','#dfc090')}${poly('690,657 731,629 906,661 906,694','url(#st)')}${poly('690,657 906,694 906,704 690,668','#d2d492')}${poly('690,655 727,625 731,629 694,658','#d4886a')}</g>`;
def('rf-scene',':host{display:block;width:100%;height:100%}svg{display:block;width:100%;height:100%}',()=>`<svg viewBox="351 148 3489 1534" preserveAspectRatio="xMinYMin meet" role="img" aria-label="Steel joint model"><defs>
${lin('lf',1,[[0,'#c9effb'],[.5,'#c5ecf8'],[1,'#a9ccd8']])}${lin('wb',1,[[0,'#8096dd'],[.1,'#879ee8'],[.3,'#9ab1fd'],[.6,'#9fb6ff'],[1,'#98aeff']])}${lin('rf',1,[[0,'#bfe4f4'],[.2,'#c9efff'],[1,'#ccf2ff']])}
${lin('yg',1,[[0,'#c8ca8e'],[.4,'#d2d493'],[.7,'#d4d696'],[1,'#cdd090']])}${lin('st',1,[[0,'#b0b689'],[.3,'#a7ae86'],[1,'#a2a87e']])}
${lin('ep',1,[[0,'#eeeebb'],[.3,'#f8f8c0'],[1,'#f4f4bc']])}${lin('bw',1,[[0,'#8ba4e2'],[.1,'#95aff5'],[.35,'#9cb7ff'],[.9,'#9ebaff'],[1,'#9ab5fb']])}${lin('bv',0,[[0,'#7890cc',.35],[.12,'#9cb7ff',0],[.85,'#9cb7ff',0],[1,'#6c86c8',.5]])}
${lin('tf',0,[[0,'#7a92f8'],[1,'#869eff']])}${lin('sf',1,[[0,'#f9f9c2'],[.6,'#f4f4bc'],[1,'#e4e4b0']])}${lin('sh',1,[[0,'#5f7ab5',.45],[1,'#5f7ab5',0]])}</defs>
<rect x="675" y="140" width="15" height="1550" fill="#9fbaff"/><rect x="690" y="140" width="42" height="1550" fill="url(#lf)"/><rect x="732" y="140" width="175" height="1550" fill="url(#wb)"/><rect x="920" y="140" width="88" height="1550" fill="url(#rf)"/>
<path d="M675 140V1690M690 140V1690M732 140V1690M1008 140V1690" stroke="#b0bccc" stroke-width="1.500"/>
<path d="M690 281L732 252L907 280M920 325L1008 265M690 1634L732 1606L907 1634M920 1655L1008 1600" stroke="#a3b4cf" stroke-width="1" stroke-dasharray="12 5" fill="none"/>
${poly('750,541 906,569 906,1341 750,1313','url(#yg)')}${poly('754,537 906,563 906,571 755,545','#eac794')}<path d="M750 1313L906 1341" stroke="#d9bb94" stroke-width="2.500"/>
${[636,723,789,860,931,998,1084,1153,1220,1307].map(hb).join('')}${stiff(0)}${stiff(576)}
<rect x="907" y="140" width="13" height="1550" fill="#9db8ff" stroke="#a8b0c4"/>
${poly('923,618 1006,553 1023,556 940,622','#a0a57b')}${poly('923,618 940,622 940,1371 923,1368','#d3d590')}${poly('940,622 1023,556 1023,1306 940,1371','url(#ep)')}
<path d="M1002 594Q1012 589 1023 593V600L1010 602Z" fill="#b9470a"/>
${poly('987,722 1740,851 1776,823 1776,1173 983,1036','url(#bw)')}${poly('987,722 1740,851 1776,823 1776,1173 983,1036','url(#bv)','none')}
<path d="M1347 785L1377 790V1110L1347 1105Z" fill="url(#sh)"/>
${poly('977,718 986,720 986,1029 977,1029','#cd7f5a')}
${poly('990,1088 1300,1136 990,1237','#cccd8f')}${poly('975,1086 990,1088 990,1235 980,1241 975,1238','#cf825c')}
${poly('961,1264 980,1240 1290,1140 1318,1144','#b0b485')}${poly('961,1264 978,1252 1300,1143 1318,1144','#8e9369','none')}${poly('980,1243 990,1235 1274,1138 1300,1142','#dccb90')}${poly('961,1262 1312,1144 1324,1147 961,1270','#d6d995')}${poly('961,1271 999,1259 961,1288','#f0b77e')}
${[731,799,870,941,1009,1097,1162,1229,1316,645].map(y=>bolt(969,y)).join('')}${bolt(1010,1282)}
${poly('943,1064 983,1036 1776,1173 1740,1202','url(#tf)')}${poly('1781,1133 1818,1139 1781,1168','#7f97ff')}${poly('943,1064 1740,1202 1740,1218 943,1081','#9dbaff')}${poly('1740,1202 1818,1139 1818,1157 1740,1218','#cc8866')}
${poly('943,1058 979,1031 983,1036 948,1063','#d88566')}
${poly('1294,775 1304,777 1304,1126 1294,1126','#d2d592')}${poly('1304,777 1338,783 1338,1096 1304,1122','url(#sf)')}${poly('1338,783 1347,785 1347,1098 1338,1096','#da895b')}${poly('1304,1121 1337,1094 1347,1098 1311,1127','#d98b62')}
${poly('1776,818 1782,818 1782,1170 1776,1173','#cc8866')}
${poly('943,698 981,668 1070,684 1079,645 1818,773 1740,835','#879fff')}${poly('943,698 1740,835 1740,852 943,715','#9dbaff')}${poly('1740,835 1818,773 1818,789 1740,852','#cc8866')}
${poly('943,692 979,665 983,671 948,697','#d88566')}
<path d="M1620 831V814L1697 752M1656 838V1152L1620 1180V1198" fill="none" stroke="#b5b8c4" stroke-width="1.300"/>
${poly('975,600 990,597 990,660 981,667 975,667','#cf8259')}${poly('981,672 990,660 1073,674 1070,688','#e2c08c')}${poly('990,596 1034,604 1074,640 1074,675 990,660','#cdcf92')}${poly('979,592 1036,601 1078,638 1074,641 1033,606 979,597','#a0a57b')}${poly('1074,641 1078,638 1078,676 1071,686','#f0f0b8')}
<g font-family="Liberation Sans,sans-serif" font-size="19" font-weight="700"><path d="M416 1619L440 1623" stroke="#d00" stroke-width="2.500"/><path d="M450 1625L437 1618V1628Z" fill="#e00000"/><path d="M416 1619L405 1627" stroke="#0a0" stroke-width="2.500"/><path d="M398 1632L404 1622L410 1629Z" fill="#00b400"/><path d="M415 1619V1645" stroke="#00a" stroke-width="2.500"/><path d="M415 1655L410 1643H420Z" fill="#0000a0"/><circle cx="416" cy="1619" r="4" fill="#ffd400" stroke="#c00"/><text x="454" y="1633" fill="#e00000">X</text><text x="386" y="1640" fill="#00b400">Y</text><text x="409" y="1672" fill="#0000a0">Z</text></g></svg>`);
def('rf-cube',':host{display:block;width:136px;height:146px}svg{display:block}',()=>{
 const q=(a,b,c,d,f)=>{const P=(u,v)=>[0,1].map(i=>+(a[i]*(1-u)*(1-v)+b[i]*u*(1-v)+c[i]*u*v+d[i]*(1-u)*v).toFixed(1));let s=poly([a,b,c,d].map(p=>p.join()).join(' '),f,'#5e5a5a',1.8);for(const k of[.25,.75]){s+=L(...P(k,0),...P(k,1),'#6e6868',2.2)+L(...P(0,k),...P(1,k),'#6e6868',2.2)}return s};
 return `<svg width="136" height="146" viewBox="0 0 136 146">${q([1,36],[94,51],[94,145],[1,130],'#c6c6c6')}${q([1,36],[43,1],[135,17],[94,51],'#858585')}${q([94,51],[135,17],[135,111],[94,145],'#828282')}${T(48,98,'-Y',20,'#00c81e')}<g transform="rotate(-12 115 84)">${T(115,90,'-X',16,'#e81e1e')}</g><g transform="rotate(10 68 26)">${T(68,31,'+Z',14,'#28288c')}</g></svg>`});
def('rf-view',':host{display:block;position:relative;flex:1;min-height:0;background:#fff;border-right:1px solid #ddd}rf-cube{position:absolute;right:33px;top:27px}','<rf-scene></rf-scene><rf-cube></rf-cube>');

/* ---------- table panel ---------- */
def('rf-table',`:host{display:block;min-height:280px;border-left:1px solid #c0c0d0;border-top:2px solid #c0c0d0;background:linear-gradient(to right,#f5f5f5 89px,#fff 89px)}
table{border-collapse:separate;border-spacing:0;table-layout:fixed;width:100%;line-height:22px}
th,td{font-weight:400;padding:0;border-right:1px solid #d6d6d6;white-space:nowrap}
thead tr:first-child th{height:14px;background:#dcdcdc;border-color:#fafafa;line-height:8px}
thead tr+tr th{height:48px;background:#efefef;vertical-align:bottom;line-height:21px;border-bottom:1px solid #c8c8c8;padding-bottom:2px;color:#222}
thead tr+tr th:first-child,tbody th{background:#dcdcdc}
tbody th,tbody td{height:24px;border-bottom:1px solid #d6d6d6}
th:last-child,td:last-child{border-right:0}
.s div{display:flex;align-items:center;gap:8px;padding-left:4px;height:23px}
.s b{font-weight:400;background:#c95353;color:#fff;width:45px;height:20px;line-height:20px;text-align:center;flex:none}
.f{background:#fafaf2}.f1{outline:1px dotted #000;outline-offset:-2px}
.k{text-align:center}.p{padding-left:4px}
.k input{appearance:none;width:20px;height:20px;border:2px solid #555;border-radius:4px;background:#f2f2f2;display:inline-grid;place-items:center;vertical-align:top;margin-top:1px}
.k input:checked{background:#0a4db8;border-color:#0a4db8}.k input:checked::before{content:"";width:9px;height:4px;border:solid #fff;border-width:0 0 1px 1px;transform:rotate(-45deg)}`,
()=>`<table><colgroup><col style="width:90px"><col style="width:450px"><col style="width:105px"><col style="width:450px"><col style="width:330px"><col style="width:128px"><col></colgroup><thead><tr>${'<th></th>'.repeat(7)}</tr><tr><th>Design<br>Situation</th><th>EN 1990 | CEN | 2010-04<br>Design Situation Type</th><th>To<br>Design</th><th>EN 1993 | CEN | 2015-06<br>Design Situation Type</th><th>Combinations to Design</th><th>Options</th><th>Comment</th></tr></thead><tbody>${[['DS1','','Tension'],['DS4','','Moment'],['DS5','All',''],['DS6','','']].map((r,i)=>`<tr><th>${r[0]}</th><td class="s f ${i?'':'f1'}"><div><b>ULS</b>ULS (STR/GEO) - Permanent and transient - Eq. 6.10</div></td><td class="k"><input type="checkbox" aria-label="Design ${r[0]}" ${i==2?'checked':''}></td><td class="s"><div><b>ULS</b>ULS (STR/GEO) - Permanent and transient</div></td><td class="p ${i==2?'':'f'}">${r[1]}</td><td></td><td class="p">${r[2]}</td></tr>`).join('')}</tbody></table>`);
def('rf-panel',`:host{display:flex;flex-direction:column;padding-top:6px}
header{display:flex;align-items:center;height:30px;background:#d3e0f1;font-weight:700;padding:0 4px 0 8px;color:#222;font-size:17px}header span{flex:1}
nav{display:flex;gap:15px;height:28px;align-items:center;padding-left:8px}
.bar{display:flex;align-items:center;height:41px;border-top:1px solid #dcdcdc;padding-left:2px}
.bar>i{width:1px;height:32px;background:#8c8c8c;margin:0 8px 0 6px}
.bar>i+rf-combo{margin-right:3px}
.bar rf-tools:last-child{padding-left:2px}
.foot{display:flex;height:30px;border-top:2px solid #c4c4d2}
.pg{display:flex;width:186px;align-items:center}
.pg span{flex:1;text-align:center}.pg button{width:26px;display:grid;place-items:center}
[role=tab]{height:27px;padding:0 8px;background:#ececec;border:solid #c4c4d2;border-width:0 2px 2px 0}
[role=tab].on{background:#fff;height:29px;margin-top:-2px;border-left-width:2px}`,
`<header><span>Design Situations | Steel Joint Design | EN 1993 | CEN | 2015-06</span><button aria-label="Float">${ic('dock')}</button><button aria-label="Close">${ic('x')}</button></header>
<nav><button>Go To</button><button>Edit</button><button>Selection</button><button>View</button><button>Settings</button></nav>
<div class="bar"><rf-combo style="width:348px" icon="beamp" label="Add-on" value="Steel Joint Design" steps="al arg-"></rf-combo><i></i><rf-combo style="width:453px" icon="inp" label="Table" value="Input Data" steps="alg- arg-"></rf-combo><rf-tools items="| *tl *tr" end></rf-tools><rf-tools end items="beamg beamgr eyediag xxxdiag | r1 r2 r3 r4 | excel | globe | hand2 | help"></rf-tools></div>
<rf-table></rf-table>
<div class="foot"><div class="pg"><button aria-label="First">${ic('pf')}</button><button aria-label="Previous">${ic('pp')}</button><span>1 of 5</span><button aria-label="Next">${ic('pn')}</button><button aria-label="Last">${ic('pl')}</button></div><button role="tab" class="on">Design Situations</button><button role="tab">Objects to Design</button><button role="tab">Ultimate Configurations</button><button role="tab">Stiffness Analysis Configurations</button><button role="tab">Steel Joints</button></div>`);
def('rf-status',`:host{display:flex;height:25px;background:#e4e4f0;align-items:center;justify-content:flex-end}
span{height:23px;line-height:23px;border-left:1px solid #ccc;padding-left:5px;box-sizing:border-box}`,'<span style="width:156px"></span><span style="width:306px">CS: Global XYZ</span><span style="width:97px">Plane: XY</span><span style="width:110px"></span><span style="width:111px"></span><span style="width:111px"></span>');
def('rf-app',`:host{display:flex;flex-direction:column;height:100vh}
main{flex:1;min-height:0;display:flex;gap:6px;border-top:1px solid #dcdcdc}
.work{flex:1;min-width:0;display:flex;flex-direction:column}
.low{height:37px}.fill{flex:1}.low rf-combo{margin:0 2px 0 1px}`,
`<rf-title></rf-title><rf-menu></rf-menu>
<rf-bar><rf-tools handle end items="new open cloud cubes handlist save print v starpage page | undo v redo V | *nav *table listg console sc panel"></rf-tools><rf-tools handle end items="select v plusminus"></rf-tools><rf-tools handle items="loadstar load"></rf-tools><rf-combo style="width:453px" label="Load case" value="MomentRFEM" steps="al ar"><rf-case></rf-case></rf-combo><rf-tools end items="funnelx v *eyesup xxxsup eyeload xxxload boxes *grideye *v eyediag xxxdiag | resset abacus v"></rf-tools><rf-tools handle items="lensx cube cubepen cubeflat | axX axY axZ axmX v micro v | step v plate v dim10 v beam v rdots orange"></rf-tools></rf-bar>
<rf-bar><rf-tools handle end items="stardot v sline smember v spoly v | ssup ssup2 ssup3 | ssurf v ssurf2 v ssurf3 v ssurf4 v solidg | starg V | ld1 ld2 ld3 ldg ldm v ldn v"></rf-tools><rf-tools handle end items="funnel | gsnap film | bend fan speaker darr wedge | wav1 wav2 wav3 wav4 wav5 starwin pin | ecgr V"></rf-tools><rf-tools handle items="gridwin snap *pl1 pl2 pl3 | nodes rot mirror redx gear"></rf-tools></rf-bar>
<main><rf-navigator></rf-navigator><div class="work"><rf-view></rf-view><rf-panel></rf-panel></div></main>
<rf-bar class="low"><rf-tools small items="cs"></rf-tools><rf-combo style="width:300px" label="Coordinate system" value="1 - Global XYZ"><i style="width:18px;height:18px;background:#c0ffff;margin-left:4px"></i></rf-combo><rf-tools small items="| wb1 wb2 wb3 wb4 wb5 | stk starx v xx person seldoc | dots v renum v | l1 l2 l3 v l4 l5 l6 l7 l8 l9 l10 | m1 v m2 m3 m4"></rf-tools><span class="fill"></span><rf-tools small items="perp _ geye _ gwinb *geyeb _ bstar *beye _ _ *magg *mag *sq *cx sqx perp2 dl par tan dia x1 x2 x3 x4 *g4 bsq layers *seg *dnl"></rf-tools></rf-bar>
<rf-status></rf-status>`);
</script>
</body>
</html>
